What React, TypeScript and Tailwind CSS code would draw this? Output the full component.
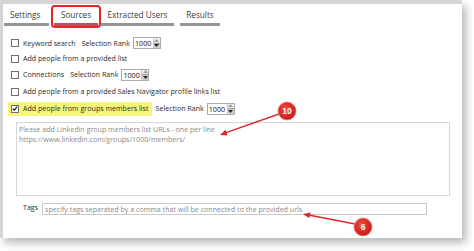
import React from "react";

const font = { fontFamily: '"Open Sans", "Noto Sans", "Liberation Sans", sans-serif' };

function Check({ checked = false }: { checked?: boolean }) {
  return (
    <div className="w-[8px] h-[8px] border border-[#6f6f6f] bg-white flex items-center justify-center shrink-0">
      {checked && (
        <svg width="7" height="7" viewBox="0 0 7 7">
          <path d="M1 3.6 L2.8 5.4 L6 1.2" stroke="#111" strokeWidth="1.3" fill="none" />
        </svg>
      )}
    </div>
  );
}

function Spin() {
  return (
    <div className="flex h-[12px] w-[28px] border border-[#a9abb0] bg-white">
      <div className="flex-1 text-[7.2px] leading-[10px] pl-[1px] text-[#111]">1000</div>
      <div className="w-[7px] flex flex-col border-l border-[#c9c9c9]">
        <div className="flex-1 flex items-center justify-center bg-[#f1f1f1]">
          <svg width="5" height="3" viewBox="0 0 5 3"><path d="M0 3 L2.5 0 L5 3Z" fill="#9a9a9a" /></svg>
        </div>
        <div className="flex-1 flex items-center justify-center bg-[#cfcfcf] border-t border-[#9a9a9a]">
          <svg width="5" height="3" viewBox="0 0 5 3"><path d="M0 0 L2.5 3 L5 0Z" fill="#222" /></svg>
        </div>
      </div>
    </div>
  );
}

export default function App() {
  return (
    <div className="relative w-[474px] h-[251px] bg-white overflow-hidden text-[#2a2a2a]" style={font}>
      <div className="w-[462px] h-[238px] border-t-[4px] border-l-[3px] border-[#d5d5d5] shadow-[4px_5px_9px_rgba(0,0,0,0.28)] rounded-tr-[3px] bg-white flex flex-col">
        {/* tabs */}
        <div className="flex items-end h-[22px] text-[8.2px] text-[#3a3a3a]">
          <div className="w-[45px] ml-[1px] h-[22px] flex flex-col">
            <div className="flex-1 flex items-center pl-[6px] pt-[3px]">Settings</div>
            <div className="h-[3px] bg-[#959595]" />
          </div>
          <div className="w-[50px] ml-[2px] h-[23px] -mb-[2px] flex flex-col border-[2px] border-[#e0262b] rounded-[4px] px-[1px] relative z-10">
            <div className="flex-1 flex items-center justify-center pt-[1px]">Sources</div>
            <div className="h-[3px] bg-[#b9525a]" />
          </div>
          <div className="w-[73px] h-[22px] flex flex-col">
            <div className="flex-1 flex items-center justify-center pt-[3px]">Extracted Users</div>
            <div className="h-[3px] bg-[#959595]" />
          </div>
          <div className="w-[40px] ml-[6px] h-[22px] flex flex-col">
            <div className="flex-1 flex items-center justify-center pt-[3px]">Results</div>
            <div className="h-[3px] bg-[#959595]" />
          </div>
        </div>

        {/* rows */}
        <div className="flex flex-col pl-[8px] text-[7.1px] mt-[9px]">
          <div className="flex items-center h-[16px]">
            <Check />
            <span className="ml-[4px]">Keyword search</span>
            <span className="ml-[6px]">Selection Rank</span>
            <span className="ml-[3px]"><Spin /></span>
          </div>
          <div className="flex items-center h-[15px]">
            <Check />
            <span className="ml-[4px]">Add people from a provided list</span>
          </div>
          <div className="flex items-center h-[17px]">
            <Check />
            <span className="ml-[4px]">Connections</span>
            <span className="ml-[6px]">Selection Rank</span>
            <span className="ml-[3px]"><Spin /></span>
          </div>
          <div className="flex items-center h-[17px]">
            <Check />
            <span className="ml-[4px]">Add people from a provided Sales Navigator profile links list</span>
          </div>
          <div className="flex items-center h-[17px]">
            <div className="flex items-center bg-[#f6f77a] h-[14px] -ml-[3px] pl-[3px] pr-[3px]">
              <Check checked />
              <span className="ml-[4px]">Add people from groups members list</span>
            </div>
            <span className="ml-[4px]">Selection Rank</span>
            <span className="ml-[3px]"><Spin /></span>
          </div>
        </div>

        {/* textarea */}
        <div className="ml-[13px] mt-[5px] w-[434px] h-[74px] border border-[#d6d6d6] px-[2px] pt-[2px] text-[7.1px] leading-[9.5px] text-[#8a8a8a]">
          <div>Please add Linkedin group members list URLs - one per line</div>
          <div>https://www.linkedin.com/groups/1000/members/</div>
        </div>

        {/* tags */}
        <div className="flex items-center ml-[20px] mt-[7px] h-[12px]">
          <span className="text-[7.1px] -mt-[4px]">Tags</span>
          <div className="ml-[4px] w-[385px] h-[12px] border border-[#c9c9c9] text-[7.1px] leading-[10px] pl-[2px] text-[#8a8a8a]">
            specify tags separated by a comma that will be connected to the provided urls
          </div>
        </div>
      </div>

      {/* annotations */}
      <svg className="absolute left-0 top-0" width="474" height="251" viewBox="0 0 474 251">
        <defs>
          <radialGradient id="bg" cx="0.4" cy="0.35" r="0.7">
            <stop offset="0" stopColor="#f24a3c" />
            <stop offset="1" stopColor="#c8141b" />
          </radialGradient>
        </defs>
        <line x1="279" y1="114" x2="226" y2="132.6" stroke="#e0282c" strokeWidth="1.4" />
        <path d="M220 135 L227.6 135.4 L225.6 129.8Z" fill="#e0282c" />
        <circle cx="287" cy="111" r="9" fill="url(#bg)" stroke="#f07a70" strokeWidth="0.8" />
        <text x="287" y="114" textAnchor="middle" fontSize="8.5" fontWeight="700" fill="#fff" fontFamily="Liberation Sans, sans-serif">10</text>

        <line x1="355" y1="224" x2="309.9" y2="215.3" stroke="#e0282c" strokeWidth="1.4" />
        <path d="M303 214 L309.3 218.3 L310.5 212.4Z" fill="#e0282c" />
        <circle cx="363" cy="227" r="9" fill="url(#bg)" stroke="#f07a70" strokeWidth="0.8" />
        <text x="363" y="230" textAnchor="middle" fontSize="8.5" fontWeight="700" fill="#fff" fontFamily="Liberation Sans, sans-serif">6</text>
      </svg>
    </div>
  );
}
